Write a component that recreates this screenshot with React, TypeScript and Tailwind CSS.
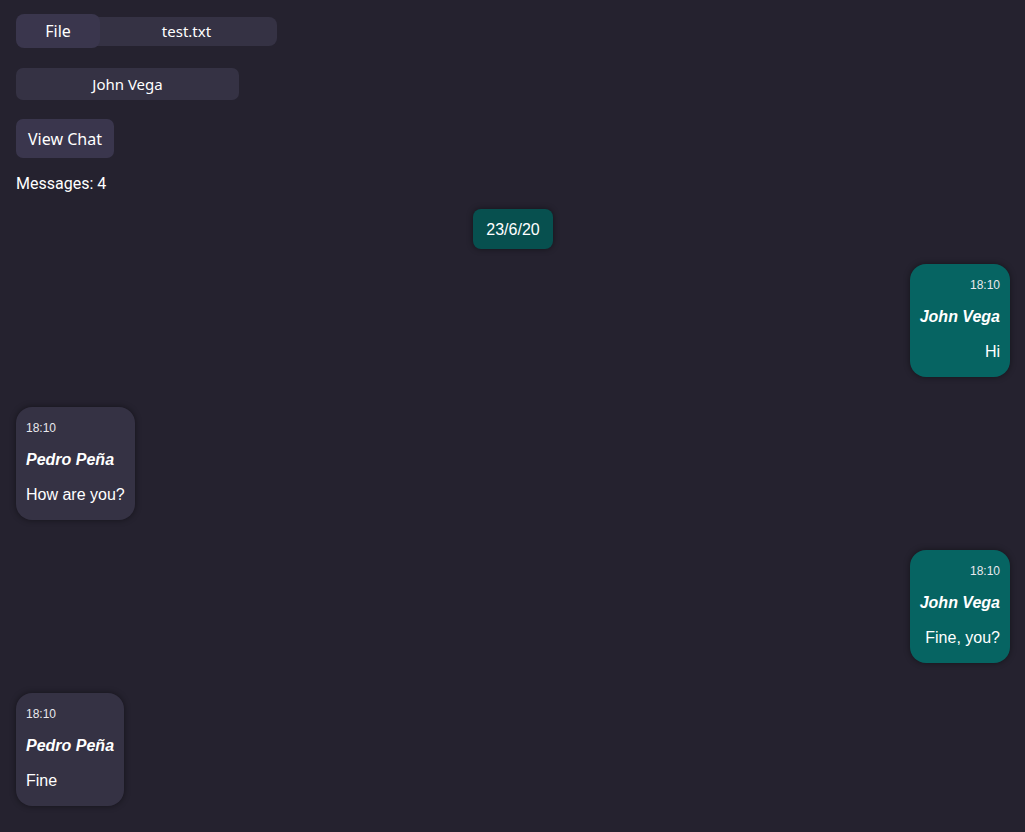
type Message = {
    time: string;
    author: string;
    text: string;
    mine: boolean;
};

const messages: Message[] = [
    { time: '18:10', author: 'John Vega', text: 'Hi', mine: true },
    { time: '18:10', author: 'Pedro Peña', text: 'How are you?', mine: false },
    { time: '18:10', author: 'John Vega', text: 'Fine, you?', mine: true },
    { time: '18:10', author: 'Pedro Peña', text: 'Fine', mine: false },
];

function Bubble({ msg }: { msg: Message }) {
    return (
        <div className={`flex ${msg.mine ? 'justify-end' : 'justify-start'}`}>
            <div
                className={`flex flex-col rounded-[16px] px-[10px] pt-[14px] pb-[16px] font-['Liberation_Sans',Arial,sans-serif] text-white shadow-[0_0_6px_rgba(0,0,0,0.45)] ${
                    msg.mine ? 'items-end bg-[#066462]' : 'items-start bg-[#353244]'
                }`}
            >
                <span className="h-[14px] text-[12px] leading-[14px] text-[#e8e8ee]">{msg.time}</span>
                <span className="mt-[16px] text-[16px] leading-[18px] font-bold italic">{msg.author}</span>
                <span className="mt-[17px] text-[16px] leading-[18px]">{msg.text}</span>
            </div>
        </div>
    );
}

export default function App() {
    return (
        <div className="min-h-[832px] w-full bg-[#25222f] pr-[15px] pl-4 text-white">
            {/* File picker */}
            <div className="flex items-center pt-[14px] font-['Noto_Sans',sans-serif]">
                <div className="z-10 flex h-[34px] w-[84px] items-center justify-center rounded-[8px] bg-[#3a364d] text-[16px]">
                    File
                </div>
                <div className="-ml-[4px] flex h-[29px] w-[181px] items-center justify-center rounded-r-[8px] bg-[#353244] text-[15px]">
                    test.txt
                </div>
            </div>

            {/* Author select */}
            <div className="mt-[20px] flex h-[32px] w-[223px] items-center justify-center rounded-[7px] bg-[#353244] font-['Noto_Sans',sans-serif] text-[15px]">
                John Vega
            </div>

            <button className="mt-[19px] flex h-[39px] items-center rounded-[7px] bg-[#3a364d] px-[12px] font-['Noto_Sans',sans-serif] text-[16px]">
                View Chat
            </button>

            <p className="mt-[16px] font-['Roboto',sans-serif] text-[16px] leading-[20px]">Messages: 4</p>

            {/* Date */}
            <div className="mt-[15px] flex justify-center">
                <div className="flex h-[40px] items-center rounded-[8px] bg-[#07504f] px-[13px] pt-[1px] font-['Liberation_Sans',Arial,sans-serif] text-[16px] shadow-[0_0_6px_rgba(0,0,0,0.45)]">
                    23/6/20
                </div>
            </div>

            {/* Messages */}
            <div className="mt-[15px] flex flex-col gap-[30px]">
                {messages.map((m, i) => (
                    <Bubble key={i} msg={m} />
                ))}
            </div>
        </div>
    );
}
